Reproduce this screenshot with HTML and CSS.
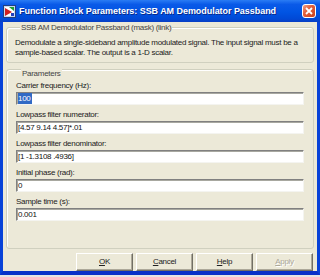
FILE: index.html
```html
<!DOCTYPE html>
<html lang="en">
<head>
    <meta charset="UTF-8">
    <title>Function Block Parameters: SSB AM Demodulator Passband</title>
    <link rel="stylesheet" href="styles.css">
</head>
<body>
    <div class="window">
        <div class="titlebar">
            <svg class="app-icon" width="13" height="13" viewBox="0 0 13 13">
                <rect x="0.5" y="0.5" width="12" height="12" fill="#c8d8f0" stroke="#204080"/>
                <rect x="2" y="2" width="9" height="9" fill="#ffffff"/>
                <path d="M2 3 L9 7 L2 11 Z" fill="#d02020"/>
                <path d="M6 2 L11 2 L11 6 Z" fill="#20a030"/>
                <rect x="8" y="8" width="3" height="3" fill="#2040c0"/>
            </svg>
            <span class="title">Function Block Parameters: SSB AM Demodulator Passband</span>
            <div class="close-btn">
                <svg width="8" height="8" viewBox="0 0 8 8">
                    <path d="M1 1 L7 7 M7 1 L1 7" stroke="#fff" stroke-width="1.8"/>
                </svg>
            </div>
        </div>

        <div class="content">
            <div class="group group-desc">
                <div class="group-title">SSB AM Demodulator Passband (mask) (link)</div>
                <p class="desc">Demodulate a single-sideband amplitude modulated signal. The input signal must be a sample-based scalar. The output is a 1-D scalar.</p>
            </div>

            <div class="group group-params">
                <div class="group-title">Parameters</div>
                <div class="param">
                    <div class="param-label">Carrier frequency (Hz):</div>
                    <div class="field"><span class="sel">100</span></div>
                </div>
                <div class="param">
                    <div class="param-label">Lowpass filter numerator:</div>
                    <div class="field">[4.57 9.14 4.57]*.01</div>
                </div>
                <div class="param">
                    <div class="param-label">Lowpass filter denominator:</div>
                    <div class="field">[1 -1.3108 .4936]</div>
                </div>
                <div class="param">
                    <div class="param-label">Initial phase (rad):</div>
                    <div class="field">0</div>
                </div>
                <div class="param">
                    <div class="param-label">Sample time (s):</div>
                    <div class="field">0.001</div>
                </div>
            </div>

            <div class="buttons">
                <div class="btn"><u>O</u>K</div>
                <div class="btn"><u>C</u>ancel</div>
                <div class="btn"><u>H</u>elp</div>
                <div class="btn disabled"><u>A</u>pply</div>
            </div>
        </div>
    </div>
</body>
</html>
```

FILE: styles.css
```css
body {
    margin: 0;
    padding: 0;
    width: 320px;
    height: 277px;
    overflow: hidden;
    background-color: #e4e4e4;
    font-family: "Liberation Sans", Arial, sans-serif;
    font-size: 8px;
    letter-spacing: -0.28px;
    color: #222;
}
.window {
    width: 320px;
    height: 275px;
    box-sizing: border-box;
    border-left: 3px solid #0842d8;
    border-right: 3px solid #0842d8;
    border-bottom: 4px solid #0831c8;
    display: flex;
    flex-direction: column;
}
.titlebar {
    height: 22px;
    margin: 0 -3px;
    flex-shrink: 0;
    display: flex;
    align-items: center;
    background: linear-gradient(#2a7cf4 0%, #0a5ae8 20%, #0054e3 55%, #0049d6 85%, #0a3fc4 100%);
}
.app-icon {
    margin-left: 3px;
    flex-shrink: 0;
}
.title {
    margin-left: 3px;
    flex: 1;
    color: #fff;
    font-weight: bold;
    font-size: 9px;
    letter-spacing: -0.05px;
    white-space: nowrap;
    text-shadow: 1px 1px 0 #0a2a8a;
}
.close-btn {
    width: 14px;
    height: 14px;
    margin-right: 4px;
    box-sizing: border-box;
    border: 1px solid #fff;
    border-radius: 3px;
    background: linear-gradient(135deg, #f0a088 0%, #e2603c 40%, #c8401c 100%);
    display: flex;
    align-items: center;
    justify-content: center;
}
.content {
    flex: 1;
    background-color: #ece9d8;
    display: flex;
    flex-direction: column;
}
.group {
    margin: 0 3px;
    border: 1px solid #d0d0bf;
    border-radius: 3px;
    box-shadow: 1px 1px 0 #fff inset;
}
.group-title {
    display: table;
    margin: -6px 0 0 5px;
    padding: 0 1px;
    line-height: 11px;
    background-color: #ece9d8;
    color: #444;
}
.group-desc {
    margin-top: 5px;
    padding: 0 8px 4px 8px;
}
.desc {
    margin: 5px 0 0 0;
    line-height: 10px;
}
.group-params {
    margin-top: 6px;
    padding: 4px 9px 24px 9px;
}
.param-label {
    height: 13px;
    line-height: 13px;
}
.field {
    height: 13px;
    line-height: 11px;
    margin-bottom: 3px;
    box-sizing: border-box;
    padding-left: 1px;
    background-color: #fff;
    border: 1px solid;
    border-color: #808080 #f4f4f0 #f4f4f0 #808080;
    box-shadow: 1px 1px 0 #a8a8a0 inset;
    color: #111;
    white-space: nowrap;
}
.sel {
    display: inline-block;
    background-color: #316ac5;
    color: #fff;
    padding: 0 1px 0 0;
}
.buttons {
    margin-top: 4px;
    padding-right: 4px;
    display: flex;
    justify-content: flex-end;
    gap: 3px;
}
.btn {
    width: 57px;
    height: 18px;
    box-sizing: border-box;
    line-height: 16px;
    text-align: center;
    background-color: #ece9d8;
    border: 1px solid;
    border-color: #fff #716f64 #716f64 #fff;
    box-shadow: -1px -1px 0 #aca899 inset;
    color: #222;
}
.btn.disabled {
    color: #aca899;
    text-shadow: 1px 1px 0 #fff;
}
```
